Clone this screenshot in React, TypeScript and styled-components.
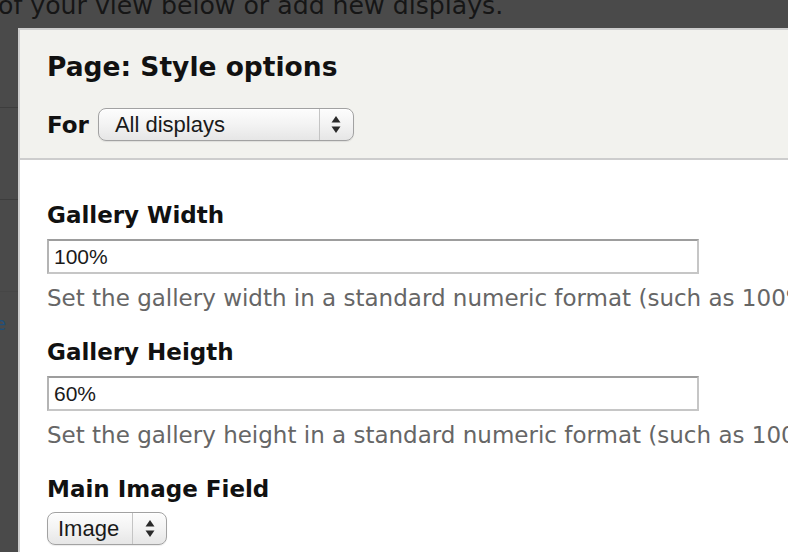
import React from 'react';
import styled, { createGlobalStyle } from 'styled-components';

const GlobalStyle = createGlobalStyle`
    html, body {
        margin: 0;
        padding: 0;
        overflow: hidden;
    }
`;

const Page = styled.div`
    width: 788px;
    height: 552px;
    overflow: hidden;
    background-color: #4a4a4a;
    font-family: 'DejaVu Sans', sans-serif;
`;

const Intro = styled.div`
    height: 28px;
    overflow: hidden;
`;

const IntroText = styled.div`
    margin: -9px 0 0 -2px;
    font-size: 25.2px;
    line-height: 30px;
    color: #161616;
    white-space: nowrap;
`;

const Stage = styled.div`
    display: flex;
    align-items: flex-start;
`;

const Backdrop = styled.div`
    width: 18px;
    flex-shrink: 0;
    display: flex;
    flex-direction: column;
`;

const BackdropRow = styled.div<{ h: number; line?: string }>`
    height: ${(props) => props.h}px;
    border-bottom: 1px solid ${(props) => props.line || 'transparent'};
    overflow: hidden;
`;

const BackdropLink = styled.span`
    display: block;
    margin: 22px 0 0 -10px;
    font-size: 18px;
    line-height: 20px;
    color: #1f4f7a;
`;

const Dialog = styled.div`
    width: 900px;
    flex-shrink: 0;
    height: 560px;
    background-color: #ffffff;
    border-top: 2px solid #cdcdcd;
    border-left: 2px solid #cdcdcd;
`;

const Header = styled.div`
    background-color: #f2f2ee;
    border-bottom: 2px solid #cdcdcd;
    padding: 21px 0 17px 27px;
`;

const Title = styled.h1`
    margin: 0;
    font-size: 26.5px;
    line-height: 32px;
    font-weight: bold;
    color: #111111;
`;

const ForRow = styled.div`
    display: flex;
    align-items: center;
    gap: 9px;
    margin-top: 25px;
`;

const ForLabel = styled.span`
    font-size: 23px;
    font-weight: bold;
    color: #111111;
`;

const SelectBox = styled.div<{ width: number; pad: number }>`
    box-sizing: border-box;
    width: ${(props) => props.width}px;
    height: 33px;
    display: flex;
    align-items: stretch;
    border: 1px solid #a2a2a2;
    border-radius: 8px;
    background: linear-gradient(#fdfdfd, #f3f3f3 50%, #e6e6e6);
    box-shadow: inset 0 1px 0 #ffffff, 0 1px 1px rgba(0, 0, 0, 0.08);
    font-family: 'Liberation Sans', Arial, sans-serif;
    font-size: 22px;
    color: #1a1a1a;
    padding-left: ${(props) => props.pad}px;
`;

const SelectText = styled.span`
    flex: 1;
    display: flex;
    align-items: center;
    white-space: nowrap;
`;

const SelectArrows = styled.span`
    width: 33px;
    border-left: 1px solid #c4c4c4;
    display: flex;
    align-items: center;
    justify-content: center;
`;

const Body = styled.div`
    padding: 41px 0 0 27px;
    display: flex;
    flex-direction: column;
    gap: 26px;
`;

const Field = styled.div`
    display: flex;
    flex-direction: column;
`;

const Label = styled.label`
    font-size: 23px;
    line-height: 28px;
    font-weight: bold;
    color: #111111;
`;

const TextInput = styled.div`
    box-sizing: border-box;
    width: 652px;
    height: 35px;
    margin-top: 10px;
    padding: 0 5px;
    display: flex;
    align-items: center;
    border: 2px solid #c6c6c6;
    border-top-color: #9d9d9d;
    border-left-color: #b4b4b4;
    font-family: 'Liberation Sans', Arial, sans-serif;
    font-size: 21px;
    color: #1a1a1a;
`;

const Description = styled.div`
    margin-top: 11px;
    font-size: 23px;
    line-height: 27px;
    color: #666666;
    white-space: nowrap;
`;

const SelectSpacer = styled.div`
    margin-top: 9px;
`;

const Arrows = () => (
    <svg width="10" height="17" viewBox="0 0 10 17">
        <path d="M5 0 L9.5 6.5 L0.5 6.5 Z" fill="#2a2a2a" />
        <path d="M5 17 L9.5 10.5 L0.5 10.5 Z" fill="#2a2a2a" />
    </svg>
);

const Select: React.FC<{ width: number; pad: number; value: string }> = ({ width, pad, value }) => (
    <SelectBox width={width} pad={pad}>
        <SelectText>{value}</SelectText>
        <SelectArrows>
            <Arrows />
        </SelectArrows>
    </SelectBox>
);

const fields = [
    {
        label: 'Gallery Width',
        value: '100%',
        help: 'Set the gallery width in a standard numeric format (such as 100% or 500px).',
    },
    {
        label: 'Gallery Heigth',
        value: '60%',
        help: 'Set the gallery height in a standard numeric format (such as 100% or 500px).',
    },
];

const App: React.FC = () => {
    return (
        <Page>
            <GlobalStyle />
            <Intro>
                <IntroText>of your view below or add new displays.</IntroText>
            </Intro>
            <Stage>
                <Backdrop>
                    <BackdropRow h={79} line="#3d3d3d" />
                    <BackdropRow h={91} line="#3d3d3d" />
                    <BackdropRow h={91} line="#464646" />
                    <BackdropRow h={91}>
                        <BackdropLink>le</BackdropLink>
                    </BackdropRow>
                </Backdrop>
                <Dialog>
                    <Header>
                        <Title>Page: Style options</Title>
                        <ForRow>
                            <ForLabel>For</ForLabel>
                            <Select width={256} pad={16} value="All displays" />
                        </ForRow>
                    </Header>
                    <Body>
                        {fields.map((field) => (
                            <Field key={field.label}>
                                <Label>{field.label}</Label>
                                <TextInput>{field.value}</TextInput>
                                <Description>{field.help}</Description>
                            </Field>
                        ))}
                        <Field>
                            <Label>Main Image Field</Label>
                            <SelectSpacer>
                                <Select width={120} pad={10} value="Image" />
                            </SelectSpacer>
                        </Field>
                    </Body>
                </Dialog>
            </Stage>
        </Page>
    );
};

export default App;
